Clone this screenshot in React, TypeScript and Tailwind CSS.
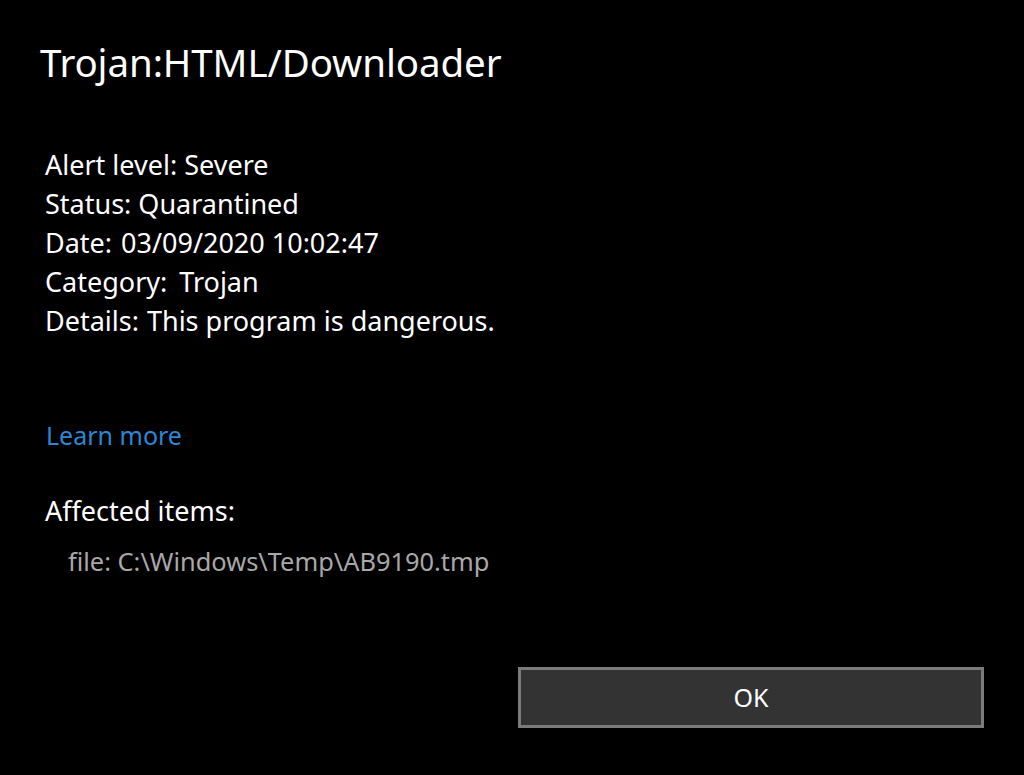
import React from "react";

export default function App() {
  return (
    <div
      className="w-[1024px] h-[775px] bg-black text-white flex flex-col overflow-hidden"
      style={{ fontFamily: '"Noto Sans", "Open Sans", sans-serif' }}
    >
      <h1 className="pl-[40px] pt-[38px] text-[38.5px] leading-[48px] font-normal tracking-[-0.1px]">
        Trojan:HTML/Downloader
      </h1>
      <div className="pl-[45px] mt-[59px] text-[27px] leading-[39px]">
        <div>Alert level: Severe</div>
        <div>Status: Quarantined</div>
        <div>
          Date:<span className="ml-[9px]">03/09/2020 10:02:47</span>
        </div>
        <div>
          Category:<span className="ml-[12px]">Trojan</span>
        </div>
        <div>
          Details:<span className="ml-[8px]">This program is dangerous.</span>
        </div>
      </div>
      <div className="pl-[46px] mt-[76px] text-[25px] leading-[39px] text-[#2d86d6]">
        Learn more
      </div>
      <div className="pl-[45px] mt-[36px] text-[27px] leading-[39px]">
        Affected items:
      </div>
      <div className="pl-[68px] mt-[12px] text-[25.4px] leading-[39px] text-[#a8a8a8]">
        file: C:\Windows\Temp\AB9190.tmp
      </div>
      <div className="flex justify-end pr-[40px] mt-[86px]">
        <button className="w-[466px] h-[61px] bg-[#333333] border-[3px] border-[#7b7b7b] text-[25px] text-white">
          OK
        </button>
      </div>
    </div>
  );
}
